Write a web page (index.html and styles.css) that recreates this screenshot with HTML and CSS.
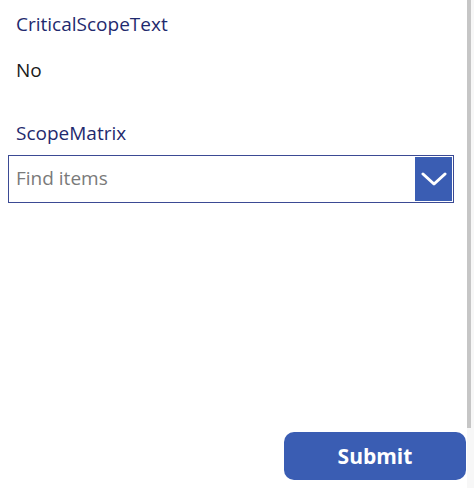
FILE: index.html
```html
<!DOCTYPE html>
<html>
<head>
<meta charset="utf-8">
<link rel="stylesheet" href="styles.css">
</head>
<body>
<div class="page">
  <div class="form">
    <div class="field">
      <div class="label">CriticalScopeText</div>
      <div class="value">No</div>
    </div>
    <div class="field field-matrix">
      <div class="label">ScopeMatrix</div>
      <div class="combo">
        <span class="placeholder">Find items</span>
        <span class="chev">
          <svg width="26" height="16" viewBox="0 0 26 16"><path d="M2 3 L13 13 L24 3" fill="none" stroke="#fff" stroke-width="3" stroke-linecap="round" stroke-linejoin="round"/></svg>
        </span>
      </div>
    </div>
    <div class="spacer"></div>
    <div class="actions">
      <button class="submit">Submit</button>
    </div>
  </div>
  <div class="scrollbar"><div class="thumb"></div></div>
</div>
</body>
</html>
```
FILE: styles.css
```css
* { box-sizing: border-box; }
html, body { margin: 0; padding: 0; background: #fff; }
body { font-family: "Open Sans", "Noto Sans", sans-serif; }
.page { display: flex; width: 474px; height: 488px; }
.form { flex: 1; display: flex; flex-direction: column; padding: 0 0 8px 8px; }
.field { display: flex; flex-direction: column; }
.label { color: #1f2a6e; font-size: 19px; line-height: 26px; padding: 11px 0 0 8px; }
.value { color: #1a1a1a; font-size: 19px; line-height: 26px; padding: 20px 0 0 8px; }
.field-matrix { margin-top: 11px; }
.field-matrix .label { padding-top: 26px; }
.combo { margin: 9px 13px 0 0; height: 48px; border: 1.5px solid #3b4a94; display: flex; align-items: stretch; padding: 1px; }
.placeholder { flex: 1; color: #7a7a7a; font-size: 19px; line-height: 43px; padding-left: 6px; }
.chev { width: 37px; background: #3a5db3; display: flex; align-items: center; justify-content: center; }
.spacer { flex: 1; }
.actions { display: flex; justify-content: flex-end; }
.submit { width: 182px; height: 48px; background: #3a5db3; color: #fff; border: none; border-radius: 10px; font-family: "Open Sans", sans-serif; font-weight: 700; font-size: 21px; margin-right: 1px; padding: 0; }
.scrollbar { width: 7px; display: flex; flex-direction: column; padding-right: 3px; background: #f7f7f7; }
.thumb { height: 428px; background: #c6c6c6; }
```
